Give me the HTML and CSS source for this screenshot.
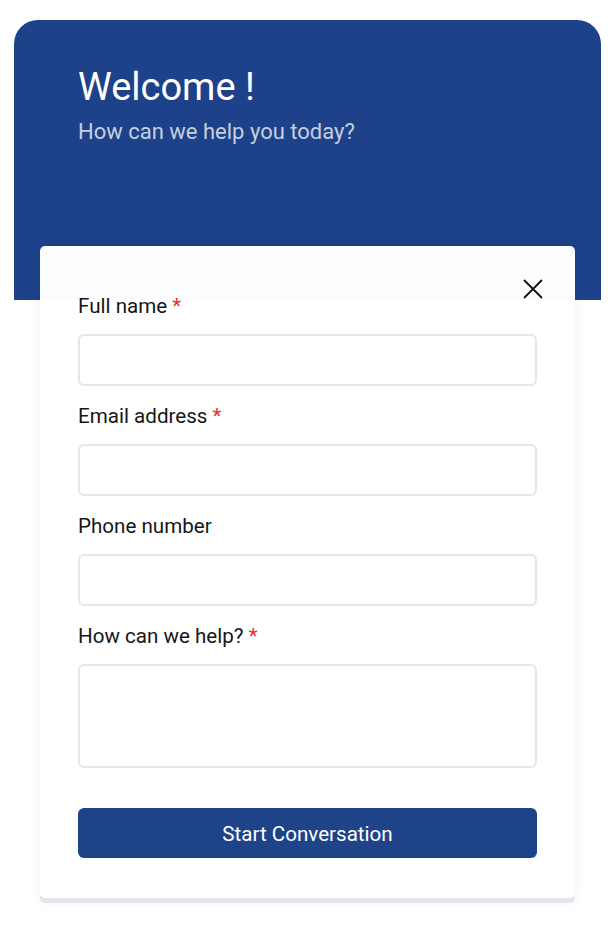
FILE: index.html
```html
<!DOCTYPE html>
<html lang="en">
<head>
<meta charset="utf-8">
<title>Welcome</title>
<link rel="stylesheet" href="styles.css">
</head>
<body>
<div class="page">
  <header class="header">
    <h1 class="title">Welcome !</h1>
    <p class="subtitle">How can we help you today?</p>
  </header>
  <form class="card">
    <button type="button" class="close" aria-label="Close">
      <svg width="20" height="20" viewBox="0 0 20 20"><path d="M1 1L19 19M19 1L1 19" stroke="#111" stroke-width="1.8" fill="none"/></svg>
    </button>
    <div class="field">
      <label class="label">Full name <span class="req">*</span></label>
      <input class="input" type="text">
    </div>
    <div class="field">
      <label class="label">Email address <span class="req">*</span></label>
      <input class="input" type="email">
    </div>
    <div class="field">
      <label class="label">Phone number</label>
      <input class="input" type="tel">
    </div>
    <div class="field">
      <label class="label">How can we help? <span class="req">*</span></label>
      <textarea class="input textarea"></textarea>
    </div>
    <button type="button" class="submit">Start Conversation</button>
  </form>
</div>
</body>
</html>
```
FILE: styles.css
```css
* { box-sizing: border-box; }
body {
  margin: 0;
  background: #ffffff;
  font-family: Roboto, "Liberation Sans", sans-serif;
}
.page {
  padding: 20px 14px;
}
.header {
  height: 280px;
  background: #1d4289;
  border-radius: 24px 24px 0 0;
  padding: 45px 64px 0;
  color: #fff;
}
.title {
  margin: 0;
  font-size: 38px;
  line-height: 1.2;
  font-weight: 400;
}
.subtitle {
  margin: 8px 0 0;
  font-size: 22px;
  line-height: 26px;
  color: rgba(255, 255, 255, 0.75);
}
.card {
  position: relative;
  margin: -54px 26px 0;
  padding: 48px 38px 40px;
  background: rgba(255, 255, 255, 0.99);
  border-radius: 5px;
  box-shadow: 0 5px 0 #e3e6ed, 0 2px 14px rgba(20, 30, 60, 0.06);
}
.close {
  position: absolute;
  top: 33px;
  right: 32px;
  width: 20px;
  height: 20px;
  padding: 0;
  border: 0;
  background: none;
  display: flex;
}
.field {
  display: flex;
  flex-direction: column;
  gap: 16px;
  margin-bottom: 18px;
}
.label {
  font-size: 20.6px;
  line-height: 24px;
  color: #161616;
}
.req {
  color: #e8302b;
}
.input {
  display: block;
  width: 100%;
  height: 52px;
  border: 2px solid #e3e6ec;
  border-radius: 6px;
  background: #fff;
  font: inherit;
}
.textarea {
  height: 104px;
  resize: none;
}
.field:last-of-type {
  margin-bottom: 40px;
}
.submit {
  display: block;
  width: 100%;
  height: 50px;
  border: 0;
  border-radius: 6px;
  background: #1e4388;
  color: #fff;
  font-family: Roboto, "Liberation Sans", sans-serif;
  font-size: 20.6px;
  padding-top: 2px;
}
```
